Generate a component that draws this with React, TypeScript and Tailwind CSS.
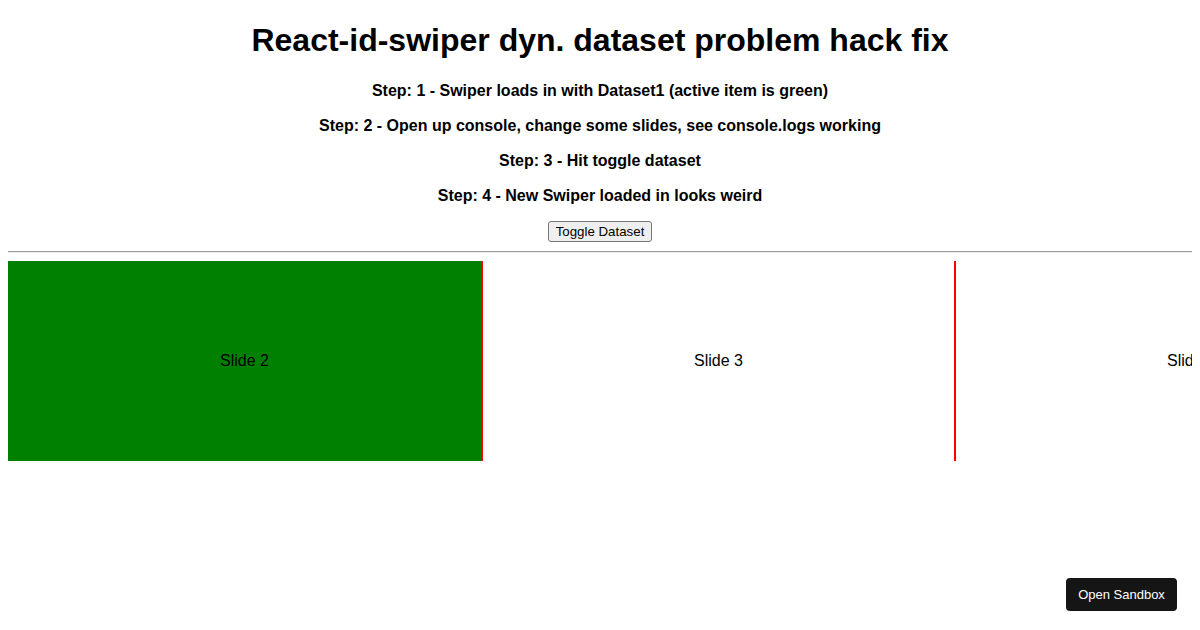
import React, { useState } from 'react';

const datasets = {
  one: ['Slide 1', 'Slide 2', 'Slide 3', 'Slide 4', 'Slide 5'],
  two: ['Item A', 'Item B', 'Item C', 'Item D'],
};

export default function App() {
  const [useFirst, setUseFirst] = useState(true);
  const slides = useFirst ? datasets.one : datasets.two;
  // active slide is index 1, swiper already scrolled past the first
  const visible = slides.slice(1, 4);

  const steps = [
    'Step: 1 - Swiper loads in with Dataset1 (active item is green)',
    'Step: 2 - Open up console, change some slides, see console.logs working',
    'Step: 3 - Hit toggle dataset',
    'Step: 4 - New Swiper loaded in looks weird',
  ];

  return (
    <div className="min-h-[630px] bg-white px-2 pb-2 pt-[22px] text-black font-['Liberation_Sans',Arial,sans-serif] text-center">
      <h1 className="text-[32px] font-bold leading-[37px]">React-id-swiper dyn. dataset problem hack fix</h1>

      <div className="mt-[22px] flex flex-col gap-4">
        {steps.map((s) => (
          <p key={s} className="text-base font-bold leading-[19px]">{s}</p>
        ))}
      </div>

      <div className="mt-4 h-[22px] flex justify-center">
        <button
          onClick={() => setUseFirst(!useFirst)}
          className="h-[21px] px-[7px] bg-[#efefef] border border-[#767676] rounded-[3px] text-[13.3px] leading-[17px] text-black"
        >
          Toggle Dataset
        </button>
      </div>

      <hr className="mt-[8px] mb-[8px] border-0 border-t border-t-[#9a9a9a] border-b border-b-[#eeeeee]" />

      <div className="flex overflow-hidden h-[200px]">
        {visible.map((label, i) => (
          <div
            key={label}
            className={`shrink-0 w-[473px] h-full flex items-center justify-center text-base ${
              i === 0 ? 'bg-[#008000]' : 'bg-white border-l-2 border-l-[#ff0000]'
            }`}
          >
            {label}
          </div>
        ))}
      </div>

      <a className="fixed right-[23px] bottom-[19px] w-[111px] h-[33px] flex items-center justify-center rounded-[4px] bg-[#151515] text-white text-[13px]">
        Open Sandbox
      </a>
    </div>
  );
}
